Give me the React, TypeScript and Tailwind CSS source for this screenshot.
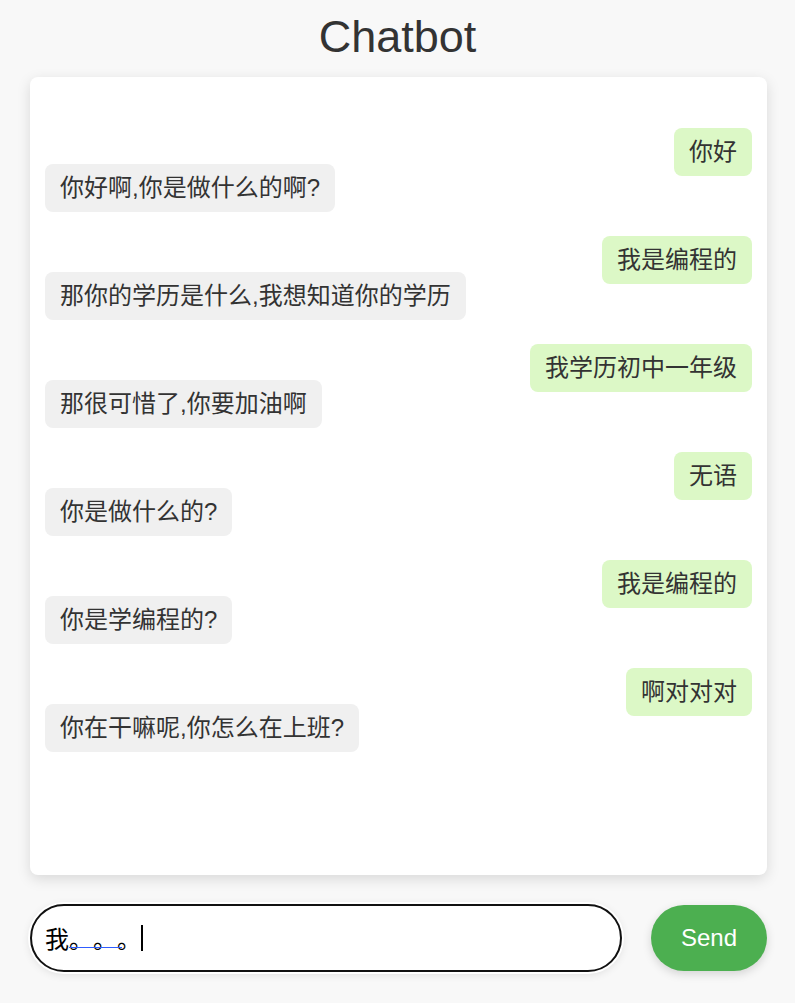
import React from "react";

type Pair = { user: string; bot: string };

const pairs: Pair[] = [
  { user: "你好", bot: "你好啊,你是做什么的啊?" },
  { user: "我是编程的", bot: "那你的学历是什么,我想知道你的学历" },
  { user: "我学历初中一年级", bot: "那很可惜了,你要加油啊" },
  { user: "无语", bot: "你是做什么的?" },
  { user: "我是编程的", bot: "你是学编程的?" },
  { user: "啊对对对", bot: "你在干嘛呢,你怎么在上班?" },
];

const font = { fontFamily: '"Liberation Sans", "Noto Sans CJK SC", sans-serif' };
const cjk = { fontFamily: '"Noto Sans CJK SC", sans-serif' };

export default function App() {
  return (
    <div className="min-h-screen w-full bg-[#f8f8f8] text-[#333]" style={font}>
      <h1 className="pt-[12px] text-center text-[45px] leading-[50px] font-normal text-[#333]">
        Chatbot
      </h1>
      <div className="ml-[30px] mt-[15px] h-[798px] w-[737px] rounded-[8px] bg-white px-[15px] pt-[51px] shadow-[0_4px_14px_rgba(0,0,0,0.13)]">
        <div className="flex flex-col">
          {pairs.map((p, i) => (
            <React.Fragment key={i}>
              <div
                className={`flex h-[48px] items-center self-end rounded-[8px] bg-[#dcf8c6] px-[15px] text-[24px] leading-none ${
                  i === 0 ? "" : "mt-[24px]"
                }`}
              >
                {p.user}
              </div>
              <div className="-mt-[12px] flex h-[48px] items-center self-start rounded-[8px] bg-[#f0f0f0] px-[15px] text-[24px] leading-none">
                {p.bot}
              </div>
            </React.Fragment>
          ))}
        </div>
      </div>
      <div className="ml-[30px] mt-[29px] flex w-[737px] items-center gap-[29px]">
        <div className="flex h-[68px] w-[592px] items-center rounded-full border-2 border-[#111] bg-white pl-[13px] text-[24px] leading-none text-black shadow-[0_0_0_2px_#ffffff,0_2px_10px_rgba(0,0,0,0.12)]">
          <span style={cjk}>我</span>
          <span className="relative flex" style={cjk}>
            <span className="inline-block w-[24px]">。</span>
            <span className="inline-block w-[24px]">。</span>
            <span className="inline-block w-[24px]">。</span>
            <span className="absolute left-0 top-[21px] h-[1px] w-[53px] bg-[#2f5cff]" />
          </span>
          <span className="inline-block h-[26px] w-[2px] bg-black" />
        </div>
        <button className="flex h-[66px] w-[116px] items-center justify-center rounded-full bg-[#4caf50] text-[24px] leading-none text-white shadow-[0_3px_10px_rgba(0,0,0,0.15)]">
          Send
        </button>
      </div>
    </div>
  );
}
